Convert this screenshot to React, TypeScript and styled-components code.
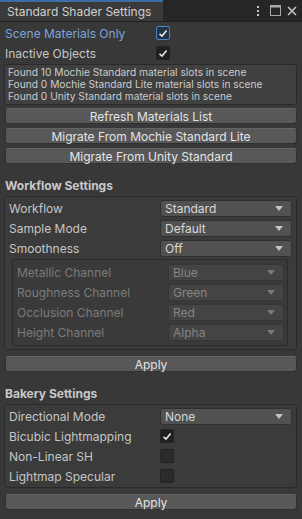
import React from 'react'
import styled, { createGlobalStyle, css } from 'styled-components'

const GlobalStyle = createGlobalStyle`
	html, body {
		margin: 0;
		padding: 0;
		background: #383838;
	}
	* { box-sizing: border-box; }
`

const Window = styled.div`
	width: 302px;
	height: 519px;
	background: #383838;
	font-family: Inter, "Noto Sans", sans-serif;
	font-size: 12px;
	color: #c4c4c4;
	overflow: hidden;
`

const TitleBar = styled.div`
	height: 22px;
	display: flex;
	align-items: stretch;
	background: #262626;
	border-bottom: 1px solid #1f1f1f;
`

const Tab = styled.div`
	width: 163px;
	background: #3a3a3a;
	border-top: 2px solid #3b6fa3;
	padding-left: 7px;
	display: flex;
	align-items: center;
	font-size: 12px;
	color: #d0d0d0;
`

const TitleIcons = styled.div`
	margin-left: auto;
	display: flex;
	align-items: center;
	padding-right: 5px;
`

const IconSlot = styled.div<{ $gap: number }>`
	display: flex;
	align-items: center;
	margin-left: ${p => p.$gap}px;
`

const Content = styled.div`
	padding: 1px 5px 0 5px;
	display: flex;
	flex-direction: column;
`

const Row = styled.div`
	height: 20px;
	display: flex;
	align-items: center;
`

const Label = styled.div<{ $focus?: boolean; $disabled?: boolean }>`
	width: 151px;
	flex-shrink: 0;
	white-space: nowrap;
	color: ${p => (p.$focus ? '#7ba6dc' : p.$disabled ? '#7b7b7b' : '#c6c6c6')};
`

const Toggle = styled.div<{ $checked?: boolean; $focus?: boolean }>`
	width: 14px;
	height: 14px;
	border-radius: 2px;
	display: flex;
	align-items: center;
	justify-content: center;
	background: ${p => (p.$checked ? '#202020' : '#2b2b2b')};
	border: 1px solid ${p => (p.$focus ? '#4a83c4' : '#232323')};
	${p => p.$focus && css`background: #253244;`}
`

const HelpBox = styled.div`
	margin-top: 1px;
	margin-left: -1px;
	background: #404040;
	border: 1px solid #2a2a2a;
	border-radius: 3px;
	padding: 1px 3px 2px 3px;
	font-size: 10.2px;
	line-height: 12px;
	color: #cccccc;
`

const Button = styled.div<{ $top?: number }>`
	height: 16px;
	margin-top: ${p => p.$top ?? 4}px;
	background: #585858;
	border: 1px solid #303030;
	border-top-color: #646464;
	border-radius: 3px;
	display: flex;
	align-items: center;
	justify-content: center;
	color: #e4e4e4;
	font-size: 12px;
`

const Header = styled.div`
	margin-top: 11px;
	height: 20px;
	display: flex;
	align-items: center;
	font-weight: 700;
	color: #c8c8c8;
`

const Box = styled.div<{ $nested?: boolean; $padBottom?: number }>`
	margin: ${p => (p.$nested ? '1px 4px 0 3px' : '1px 0 0 -1px')};
	padding: ${p => (p.$nested ? '2px 3px 3px 4px' : `1px 4px ${p.$padBottom ?? 1}px 4px`)};
	background: ${p => (p.$nested ? '#3a3a3a' : '#3b3b3b')};
	border: 1px solid #2a2a2a;
	border-radius: 3px;
	display: flex;
	flex-direction: column;
`

const Popup = styled.div<{ $disabled?: boolean }>`
	flex: 1;
	height: 17px;
	border-radius: 3px;
	padding: 0 8px 0 4px;
	display: flex;
	align-items: center;
	justify-content: space-between;
	background: ${p => (p.$disabled ? '#444444' : '#515151')};
	border: 1px solid ${p => (p.$disabled ? '#363636' : '#2f2f2f')};
	color: ${p => (p.$disabled ? '#858585' : '#d8d8d8')};
`

const Arrow = styled.span<{ $disabled?: boolean }>`
	width: 0;
	height: 0;
	border-left: 4px solid transparent;
	border-right: 4px solid transparent;
	border-top: 5px solid ${p => (p.$disabled ? '#7a7a7a' : '#c4c4c4')};
`

function Check() {
	return (
		<svg width="10" height="9" viewBox="0 0 10 9">
			<path d="M1.5 4.8 L4 7 L8.6 1.6" fill="none" stroke="#e8e8e8" strokeWidth="1.6" />
		</svg>
	)
}

function Dropdown({ value, disabled }: { value: string; disabled?: boolean }) {
	return (
		<Popup $disabled={disabled}>
			<span>{value}</span>
			<Arrow $disabled={disabled} />
		</Popup>
	)
}

export default function App() {
	return (
		<Window>
			<GlobalStyle />
			<TitleBar>
				<Tab>Standard Shader Settings</Tab>
				<TitleIcons>
					<IconSlot $gap={0}>
						<svg width="4" height="12" viewBox="0 0 4 12">
							<rect x="1" y="1" width="2" height="2" fill="#c8c8c8" />
							<rect x="1" y="5" width="2" height="2" fill="#c8c8c8" />
							<rect x="1" y="9" width="2" height="2" fill="#c8c8c8" />
						</svg>
					</IconSlot>
					<IconSlot $gap={10}>
						<svg width="11" height="11" viewBox="0 0 11 11">
							<rect x="0.5" y="0.5" width="10" height="10" fill="none" stroke="#a8a8a8" />
							<rect x="0.5" y="0.5" width="10" height="2" fill="#a8a8a8" />
						</svg>
					</IconSlot>
					<IconSlot $gap={6}>
						<svg width="10" height="10" viewBox="0 0 10 10">
							<path d="M1 1 L9 9 M9 1 L1 9" stroke="#c8c8c8" strokeWidth="1.5" />
						</svg>
					</IconSlot>
				</TitleIcons>
			</TitleBar>
			<Content>
				<Row>
					<Label $focus>Scene Materials Only</Label>
					<Toggle $checked $focus><Check /></Toggle>
				</Row>
				<Row>
					<Label>Inactive Objects</Label>
					<Toggle $checked><Check /></Toggle>
				</Row>
				<HelpBox>
					<div>Found 10 Mochie Standard material slots in scene</div>
					<div>Found 0 Mochie Standard Lite material slots in scene</div>
					<div>Found 0 Unity Standard material slots in scene</div>
				</HelpBox>
				<Button $top={3}>Refresh Materials List</Button>
				<Button>Migrate From Mochie Standard Lite</Button>
				<Button>Migrate From Unity Standard</Button>

				<Header>Workflow Settings</Header>
				<Box $padBottom={3}>
					<Row>
						<Label>Workflow</Label>
						<Dropdown value="Standard" />
					</Row>
					<Row>
						<Label>Sample Mode</Label>
						<Dropdown value="Default" />
					</Row>
					<Row>
						<Label>Smoothness</Label>
						<Dropdown value="Off" />
					</Row>
					<Box $nested>
						<Row>
							<Label $disabled>Metallic Channel</Label>
							<Dropdown value="Blue" disabled />
						</Row>
						<Row>
							<Label $disabled>Roughness Channel</Label>
							<Dropdown value="Green" disabled />
						</Row>
						<Row>
							<Label $disabled>Occlusion Channel</Label>
							<Dropdown value="Red" disabled />
						</Row>
						<Row>
							<Label $disabled>Height Channel</Label>
							<Dropdown value="Alpha" disabled />
						</Row>
					</Box>
				</Box>
				<Button $top={6}>Apply</Button>

				<Header>Bakery Settings</Header>
				<Box>
					<Row>
						<Label>Directional Mode</Label>
						<Dropdown value="None" />
					</Row>
					<Row>
						<Label>Bicubic Lightmapping</Label>
						<Toggle $checked><Check /></Toggle>
					</Row>
					<Row>
						<Label>Non-Linear SH</Label>
						<Toggle />
					</Row>
					<Row>
						<Label>Lightmap Specular</Label>
						<Toggle />
					</Row>
				</Box>
				<Button $top={6}>Apply</Button>
			</Content>
		</Window>
	)
}
